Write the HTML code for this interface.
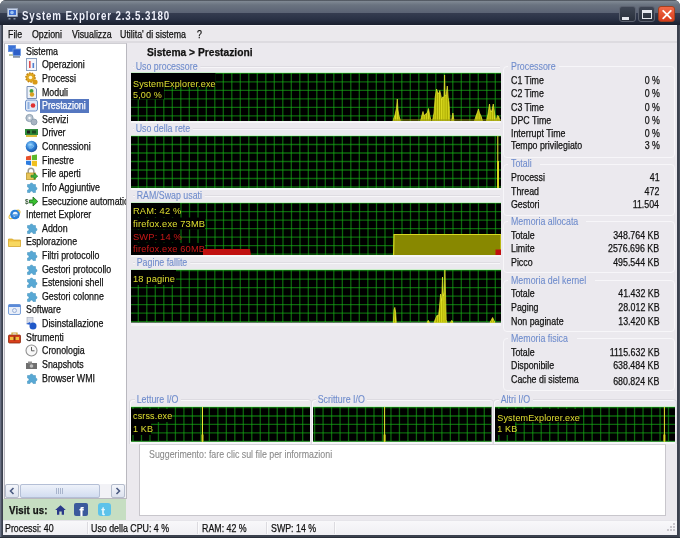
<!DOCTYPE html><html><head><meta charset="utf-8"><style>
html,body{margin:0;padding:0;width:680px;height:538px;overflow:hidden;background:#fff;}
body{position:relative;font-family:"Liberation Sans", sans-serif;}
.t{position:absolute;white-space:nowrap;line-height:1;font-family:"Liberation Sans", sans-serif;-webkit-text-stroke:0.25px currentColor;}
body{will-change:transform;}
.r{position:absolute;box-sizing:border-box;}
</style></head><body>
<div class="r" style="left:0px;top:0px;width:680px;height:538px;background:#3b414e;border-radius:6px 6px 0 0;"></div>
<div class="r" style="left:0px;top:20px;width:1px;height:518px;background:#6a7184;"></div>
<div class="r" style="left:1px;top:20px;width:1px;height:518px;background:#4a5060;"></div>
<div class="r" style="left:679px;top:20px;width:1px;height:518px;background:#4a505c;"></div>
<div class="r" style="left:0px;top:537px;width:680px;height:1px;background:#2a2f3a;"></div>
<div class="r" style="left:0px;top:0px;width:680px;height:25px;border-radius:6px 6px 0 0;background:linear-gradient(#40454e 0px,#7e8792 1.5px,#6a7380 5px,#5a6274 13px,#343b4f 13.5px,#2a3246 19px,#1a1f2e 25px);"></div>
<svg class="r" style="left:7px;top:8px" width="11" height="12" viewBox="0 0 11 12"><rect x="0.5" y="0.5" width="10" height="8" fill="#c8d4ea" stroke="#9aa6bc" stroke-width="0.8"/><rect x="2" y="2" width="7" height="5" fill="#3a6ad0"/><circle cx="5" cy="4.5" r="1.8" fill="#9cc4f4"/><rect x="1.5" y="10" width="2" height="1.5" fill="#8a94a8"/><rect x="6.5" y="10" width="2" height="1.5" fill="#8a94a8"/></svg>
<div class="t" style="left:21.50px;top:9.52px;font-size:12.5px;color:#eef0fa;font-weight:bold;letter-spacing:1.1px;transform-origin:0 0;transform:scaleX(0.78);-webkit-text-stroke:0;">System Explorer 2.3.5.3180</div>
<div class="r" style="left:619px;top:6px;width:17px;height:16px;border-radius:3px;background:linear-gradient(#3f4654,#2a303c);border:1px solid #5c6270;"><div class="r" style="left:2px;top:10px;width:7px;height:2.5px;background:#e6e8ee;"></div></div>
<div class="r" style="left:638px;top:6px;width:17px;height:16px;border-radius:3px;background:linear-gradient(#3f4654,#2a303c);border:1px solid #5c6270;"><div class="r" style="left:3px;top:3px;width:10px;height:9px;border:1.5px solid #e6e8ee;border-top-width:3px;"></div></div>
<div class="r" style="left:658px;top:6px;width:17px;height:16px;border-radius:3px;background:linear-gradient(#f06a48,#d83c1c);border:1px solid #a4401e;"><svg class="r" style="left:2px;top:2px" width="12" height="11" viewBox="0 0 12 11"><path d="M2.2 1.8 L9.8 9.4 M9.8 1.8 L2.2 9.4" stroke="#fff" stroke-width="1.8" stroke-linecap="round"/></svg></div>
<div class="r" style="left:3px;top:25px;width:674px;height:17px;background:#ebe9ed;border-top:1px solid #f6f5f8;"></div>
<div class="t" style="left:8.00px;top:30.00px;font-size:10.4px;color:#111;font-weight:normal;letter-spacing:0px;transform-origin:0 0;transform:scaleX(0.85);">File</div>
<div class="t" style="left:31.70px;top:30.00px;font-size:10.4px;color:#111;font-weight:normal;letter-spacing:0px;transform-origin:0 0;transform:scaleX(0.85);">Opzioni</div>
<div class="t" style="left:71.80px;top:30.00px;font-size:10.4px;color:#111;font-weight:normal;letter-spacing:0px;transform-origin:0 0;transform:scaleX(0.85);">Visualizza</div>
<div class="t" style="left:119.70px;top:30.00px;font-size:10.4px;color:#111;font-weight:normal;letter-spacing:0px;transform-origin:0 0;transform:scaleX(0.85);">Utilita' di sistema</div>
<div class="t" style="left:196.80px;top:30.00px;font-size:10.4px;color:#111;font-weight:normal;letter-spacing:0px;transform-origin:0 0;transform:scaleX(0.85);">?</div>
<div class="r" style="left:3px;top:42px;width:674px;height:478px;background:#ebe9ee;"></div>
<div class="r" style="left:3px;top:41px;width:674px;height:2px;background:#dddbe0;"></div>
<div class="r" style="left:4px;top:43px;width:123px;height:456px;background:#fff;border:1px solid #b9b8bf;border-top-color:#d0cfd4;"></div>
<div class="r" style="left:5px;top:44px;width:121px;height:440px;overflow:hidden;"><div class="r" style="left:-5px;top:-44px;width:680px;height:538px;">
<svg class="r" style="left:8px;top:45px" width="13" height="13" viewBox="0 0 13 13"><rect x="0.5" y="0.5" width="7" height="6" fill="#3a72d8" stroke="#5c88d8" stroke-width="0.8"/><rect x="5" y="4" width="7.5" height="6.5" fill="#2d5fc8" stroke="#6f9be0" stroke-width="0.8"/><rect x="1" y="9" width="4" height="2" fill="#b8c4a8"/><rect x="5" y="11" width="7" height="1.8" fill="#8896a8"/></svg>
<div class="t" style="left:25.90px;top:46.70px;font-size:10.4px;color:#111;font-weight:normal;letter-spacing:0px;transform-origin:0 0;transform:scaleX(0.85);">Sistema</div>
<svg class="r" style="left:24.5px;top:58px" width="13" height="13" viewBox="0 0 13 13"><rect x="1.5" y="0.5" width="10" height="12" fill="#f4f6fb" stroke="#8aa0c0"/><rect x="4" y="3" width="1.6" height="7" fill="#e05050"/><rect x="7.5" y="5" width="1.6" height="5" fill="#5080d0"/></svg>
<div class="t" style="left:41.80px;top:60.32px;font-size:10.4px;color:#111;font-weight:normal;letter-spacing:0px;transform-origin:0 0;transform:scaleX(0.85);">Operazioni</div>
<svg class="r" style="left:24.5px;top:72px" width="13" height="13" viewBox="0 0 13 13"><circle cx="5.5" cy="5.5" r="4.6" fill="#e0a820" stroke="#c08010" stroke-width="1.4" stroke-dasharray="1.6 1.2"/><circle cx="5.5" cy="5.5" r="1.8" fill="#fff6d8"/><circle cx="10" cy="10" r="2.6" fill="#d89a18"/></svg>
<div class="t" style="left:41.80px;top:73.94px;font-size:10.4px;color:#111;font-weight:normal;letter-spacing:0px;transform-origin:0 0;transform:scaleX(0.85);">Processi</div>
<svg class="r" style="left:24.5px;top:86px" width="13" height="13" viewBox="0 0 13 13"><path d="M2 0.5 H9 L11.5 3 V12.5 H2 Z" fill="#eef2f8" stroke="#7890b8"/><circle cx="6.5" cy="5" r="2" fill="#40a040"/><circle cx="7" cy="8.5" r="2.2" fill="#d8a020"/></svg>
<div class="t" style="left:41.80px;top:87.56px;font-size:10.4px;color:#111;font-weight:normal;letter-spacing:0px;transform-origin:0 0;transform:scaleX(0.85);">Moduli</div>
<svg class="r" style="left:24.5px;top:99px" width="13" height="13" viewBox="0 0 13 13"><rect x="0.5" y="1" width="12" height="11" rx="2" fill="#dfe8f6" stroke="#6c90c8"/><rect x="2.5" y="3" width="2" height="7" fill="#90b0e0"/><circle cx="8" cy="6.5" r="2.3" fill="#e03030"/></svg>
<div class="r" style="left:40px;top:99px;width:49px;height:14px;background:#5577c0;"></div>
<div class="t" style="left:41.80px;top:101.18px;font-size:10.4px;color:#fff;font-weight:normal;letter-spacing:0px;transform-origin:0 0;transform:scaleX(0.85);">Prestazioni</div>
<svg class="r" style="left:24.5px;top:113px" width="13" height="13" viewBox="0 0 13 13"><circle cx="4.5" cy="5" r="3.6" fill="#b8c4d0" stroke="#8fa0b0"/><circle cx="9" cy="9" r="3" fill="#a8b4c2" stroke="#8fa0b0"/><circle cx="4.5" cy="5" r="1.2" fill="#fff"/></svg>
<div class="t" style="left:41.80px;top:114.80px;font-size:10.4px;color:#111;font-weight:normal;letter-spacing:0px;transform-origin:0 0;transform:scaleX(0.85);">Servizi</div>
<svg class="r" style="left:24.5px;top:126px" width="13" height="13" viewBox="0 0 13 13"><rect x="0" y="3" width="13" height="6" fill="#2e8a3a"/><rect x="1" y="9" width="11" height="2" fill="#d8c040"/><rect x="2" y="4.5" width="3" height="3" fill="#202020"/><rect x="7" y="4.5" width="4" height="3" fill="#1a4a20"/></svg>
<div class="t" style="left:41.80px;top:128.42px;font-size:10.4px;color:#111;font-weight:normal;letter-spacing:0px;transform-origin:0 0;transform:scaleX(0.85);">Driver</div>
<svg class="r" style="left:24.5px;top:140px" width="13" height="13" viewBox="0 0 13 13"><defs><radialGradient id="gl" cx="0.4" cy="0.35" r="0.7"><stop offset="0" stop-color="#8cd0ff"/><stop offset="0.6" stop-color="#2a7ad0"/><stop offset="1" stop-color="#1a4a98"/></radialGradient></defs><circle cx="6.5" cy="6.5" r="5.8" fill="url(#gl)"/><path d="M3 5 Q6 3 9 6 Q7 9 4 8" stroke="#b8e0ff" stroke-width="0.6" fill="none" opacity="0.7"/></svg>
<div class="t" style="left:41.80px;top:142.04px;font-size:10.4px;color:#111;font-weight:normal;letter-spacing:0px;transform-origin:0 0;transform:scaleX(0.85);">Connessioni</div>
<svg class="r" style="left:24.5px;top:154px" width="13" height="13" viewBox="0 0 13 13"><path d="M1 2.5 L6 1.5 V6 H1 Z" fill="#e8502a"/><path d="M6.8 1.3 L12 0.5 V6 H6.8 Z" fill="#5cb82c"/><path d="M1 6.8 H6 V11.5 L1 10.5 Z" fill="#2c7ce0"/><path d="M6.8 6.8 H12 V12.5 L6.8 11.7 Z" fill="#f0c020"/></svg>
<div class="t" style="left:41.80px;top:155.66px;font-size:10.4px;color:#111;font-weight:normal;letter-spacing:0px;transform-origin:0 0;transform:scaleX(0.85);">Finestre</div>
<svg class="r" style="left:24.5px;top:167px" width="13" height="13" viewBox="0 0 13 13"><path d="M3.2 6 V4 A2.8 2.8 0 0 1 8.8 4 V6" fill="none" stroke="#9a9a98" stroke-width="1.5"/><rect x="1.5" y="6" width="9" height="6.5" fill="#e8c458" stroke="#b89830" stroke-width="0.8"/><path d="M6 8.2 H9 V6 L12.8 9.2 L9 12.4 V10.2 H6 Z" fill="#3cb03c" stroke="#1e7a1e" stroke-width="0.6"/></svg>
<div class="t" style="left:41.80px;top:169.28px;font-size:10.4px;color:#111;font-weight:normal;letter-spacing:0px;transform-origin:0 0;transform:scaleX(0.85);">File aperti</div>
<svg class="r" style="left:24.5px;top:181px" width="13" height="13" viewBox="0 0 13 13"><path d="M2.5 3.5 H5 A1.5 1.5 0 1 1 8 3.5 H10.5 V6 A1.5 1.5 0 1 1 10.5 9 V11.5 H8 A1.5 1.5 0 1 0 5 11.5 H2.5 V9 A1.5 1.5 0 1 0 2.5 6 Z" fill="#58a8d4" stroke="#4090bc" stroke-width="0.5"/></svg>
<div class="t" style="left:41.80px;top:182.90px;font-size:10.4px;color:#111;font-weight:normal;letter-spacing:0px;transform-origin:0 0;transform:scaleX(0.85);">Info Aggiuntive</div>
<svg class="r" style="left:24.5px;top:195px" width="13" height="13" viewBox="0 0 13 13"><text x="0" y="8.5" font-size="6.5" font-family="Liberation Sans" font-weight="bold" fill="#3a5a3a">$</text><path d="M4.5 5 H8 V2 L12.8 6.5 L8 11 V8 H4.5 Z" fill="#38c030" stroke="#1a6a1a" stroke-width="0.8"/></svg>
<div class="t" style="left:41.80px;top:196.52px;font-size:10.4px;color:#111;font-weight:normal;letter-spacing:0px;transform-origin:0 0;transform:scaleX(0.85);">Esecuzione automatica</div>
<svg class="r" style="left:8px;top:208px" width="13" height="13" viewBox="0 0 13 13"><ellipse cx="6.5" cy="6.5" rx="6.3" ry="2.6" transform="rotate(-35 6.5 6.5)" fill="none" stroke="#e8c040" stroke-width="1.1"/><circle cx="7" cy="6.5" r="4.8" fill="#2a80d8"/><circle cx="7.2" cy="6.2" r="2.5" fill="#e8f4ff"/><rect x="4.8" y="6.4" width="5" height="1.3" fill="#2a80d8"/><path d="M7 9 H11" stroke="#2a80d8" stroke-width="1.6"/></svg>
<div class="t" style="left:25.90px;top:210.14px;font-size:10.4px;color:#111;font-weight:normal;letter-spacing:0px;transform-origin:0 0;transform:scaleX(0.85);">Internet Explorer</div>
<svg class="r" style="left:24.5px;top:222px" width="13" height="13" viewBox="0 0 13 13"><path d="M2.5 3.5 H5 A1.5 1.5 0 1 1 8 3.5 H10.5 V6 A1.5 1.5 0 1 1 10.5 9 V11.5 H8 A1.5 1.5 0 1 0 5 11.5 H2.5 V9 A1.5 1.5 0 1 0 2.5 6 Z" fill="#58a8d4" stroke="#4090bc" stroke-width="0.5"/></svg>
<div class="t" style="left:41.80px;top:223.76px;font-size:10.4px;color:#111;font-weight:normal;letter-spacing:0px;transform-origin:0 0;transform:scaleX(0.85);">Addon</div>
<svg class="r" style="left:8px;top:235px" width="13" height="13" viewBox="0 0 13 13"><path d="M0.5 4 H4.5 L5.5 5 H12.5 V11.5 H0.5 Z" fill="#f0c040" stroke="#d0a020" stroke-width="0.7"/><rect x="1" y="6.5" width="11" height="4.5" fill="#f8d860"/></svg>
<div class="t" style="left:25.90px;top:237.38px;font-size:10.4px;color:#111;font-weight:normal;letter-spacing:0px;transform-origin:0 0;transform:scaleX(0.85);">Esplorazione</div>
<svg class="r" style="left:24.5px;top:249px" width="13" height="13" viewBox="0 0 13 13"><path d="M2.5 3.5 H5 A1.5 1.5 0 1 1 8 3.5 H10.5 V6 A1.5 1.5 0 1 1 10.5 9 V11.5 H8 A1.5 1.5 0 1 0 5 11.5 H2.5 V9 A1.5 1.5 0 1 0 2.5 6 Z" fill="#58a8d4" stroke="#4090bc" stroke-width="0.5"/></svg>
<div class="t" style="left:41.80px;top:251.00px;font-size:10.4px;color:#111;font-weight:normal;letter-spacing:0px;transform-origin:0 0;transform:scaleX(0.85);">Filtri protocollo</div>
<svg class="r" style="left:24.5px;top:263px" width="13" height="13" viewBox="0 0 13 13"><path d="M2.5 3.5 H5 A1.5 1.5 0 1 1 8 3.5 H10.5 V6 A1.5 1.5 0 1 1 10.5 9 V11.5 H8 A1.5 1.5 0 1 0 5 11.5 H2.5 V9 A1.5 1.5 0 1 0 2.5 6 Z" fill="#58a8d4" stroke="#4090bc" stroke-width="0.5"/></svg>
<div class="t" style="left:41.80px;top:264.62px;font-size:10.4px;color:#111;font-weight:normal;letter-spacing:0px;transform-origin:0 0;transform:scaleX(0.85);">Gestori protocollo</div>
<svg class="r" style="left:24.5px;top:276px" width="13" height="13" viewBox="0 0 13 13"><path d="M2.5 3.5 H5 A1.5 1.5 0 1 1 8 3.5 H10.5 V6 A1.5 1.5 0 1 1 10.5 9 V11.5 H8 A1.5 1.5 0 1 0 5 11.5 H2.5 V9 A1.5 1.5 0 1 0 2.5 6 Z" fill="#58a8d4" stroke="#4090bc" stroke-width="0.5"/></svg>
<div class="t" style="left:41.80px;top:278.24px;font-size:10.4px;color:#111;font-weight:normal;letter-spacing:0px;transform-origin:0 0;transform:scaleX(0.85);">Estensioni shell</div>
<svg class="r" style="left:24.5px;top:290px" width="13" height="13" viewBox="0 0 13 13"><path d="M2.5 3.5 H5 A1.5 1.5 0 1 1 8 3.5 H10.5 V6 A1.5 1.5 0 1 1 10.5 9 V11.5 H8 A1.5 1.5 0 1 0 5 11.5 H2.5 V9 A1.5 1.5 0 1 0 2.5 6 Z" fill="#58a8d4" stroke="#4090bc" stroke-width="0.5"/></svg>
<div class="t" style="left:41.80px;top:291.86px;font-size:10.4px;color:#111;font-weight:normal;letter-spacing:0px;transform-origin:0 0;transform:scaleX(0.85);">Gestori colonne</div>
<svg class="r" style="left:8px;top:303px" width="13" height="13" viewBox="0 0 13 13"><rect x="0.5" y="1.5" width="12" height="10" rx="1.5" fill="#e8eef8" stroke="#7aa0d8"/><rect x="0.5" y="1.5" width="12" height="2.5" fill="#5a8ad8"/><circle cx="6.5" cy="7.5" r="2" fill="none" stroke="#9ab0d8"/></svg>
<div class="t" style="left:25.90px;top:305.48px;font-size:10.4px;color:#111;font-weight:normal;letter-spacing:0px;transform-origin:0 0;transform:scaleX(0.85);">Software</div>
<svg class="r" style="left:24.5px;top:317px" width="13" height="13" viewBox="0 0 13 13"><rect x="2" y="0.5" width="6" height="6" fill="#d8dce8" stroke="#a0a8b8" stroke-width="0.6"/><circle cx="8" cy="9" r="3.5" fill="#2058c8"/><path d="M1 7 L5 5 L6 8 Z" fill="#2a60d0"/></svg>
<div class="t" style="left:41.80px;top:319.10px;font-size:10.4px;color:#111;font-weight:normal;letter-spacing:0px;transform-origin:0 0;transform:scaleX(0.85);">Disinstallazione</div>
<svg class="r" style="left:8px;top:331px" width="13" height="13" viewBox="0 0 13 13"><rect x="0.5" y="4" width="12" height="8" rx="1" fill="#d8401c" stroke="#8a2a10" stroke-width="0.8"/><path d="M4 4 V2 H9 V4" stroke="#c8a030" stroke-width="1.2" fill="none"/><rect x="2" y="6" width="9" height="3" fill="#f0c040"/><rect x="5.5" y="5.5" width="2" height="4" fill="#8a2a10"/></svg>
<div class="t" style="left:25.90px;top:332.72px;font-size:10.4px;color:#111;font-weight:normal;letter-spacing:0px;transform-origin:0 0;transform:scaleX(0.85);">Strumenti</div>
<svg class="r" style="left:24.5px;top:344px" width="13" height="13" viewBox="0 0 13 13"><circle cx="6.5" cy="6.5" r="5.5" fill="#f8f8f8" stroke="#909090" stroke-width="1.1"/><path d="M6.5 3 V6.8 H9.5" stroke="#606060" stroke-width="1" fill="none"/></svg>
<div class="t" style="left:41.80px;top:346.34px;font-size:10.4px;color:#111;font-weight:normal;letter-spacing:0px;transform-origin:0 0;transform:scaleX(0.85);">Cronologia</div>
<svg class="r" style="left:24.5px;top:358px" width="13" height="13" viewBox="0 0 13 13"><rect x="1" y="5" width="11" height="6" fill="#707070"/><rect x="3" y="3.5" width="4" height="2" fill="#909090"/><circle cx="6.5" cy="8" r="1.8" fill="#c0c0c0"/></svg>
<div class="t" style="left:41.80px;top:359.96px;font-size:10.4px;color:#111;font-weight:normal;letter-spacing:0px;transform-origin:0 0;transform:scaleX(0.85);">Snapshots</div>
<svg class="r" style="left:24.5px;top:372px" width="13" height="13" viewBox="0 0 13 13"><path d="M2.5 3.5 H5 A1.5 1.5 0 1 1 8 3.5 H10.5 V6 A1.5 1.5 0 1 1 10.5 9 V11.5 H8 A1.5 1.5 0 1 0 5 11.5 H2.5 V9 A1.5 1.5 0 1 0 2.5 6 Z" fill="#58a8d4" stroke="#4090bc" stroke-width="0.5"/></svg>
<div class="t" style="left:41.80px;top:373.58px;font-size:10.4px;color:#111;font-weight:normal;letter-spacing:0px;transform-origin:0 0;transform:scaleX(0.85);">Browser WMI</div>
</div></div>
<div class="r" style="left:5px;top:484px;width:121px;height:14px;background:#f2f2f6;"></div>
<div class="r" style="left:5px;top:484px;width:14px;height:14px;background:linear-gradient(#f4f6fb,#dde2ee);border:1px solid #b4bccc;border-radius:2px;"></div>
<svg class="r" style="left:8px;top:487px" width="8" height="8" viewBox="0 0 8 8"><path d="M5.5 1 L2.5 4 L5.5 7" stroke="#4a5a80" stroke-width="1.6" fill="none"/></svg>
<div class="r" style="left:20px;top:484px;width:80px;height:14px;background:linear-gradient(#eef2fa,#d2dcf0);border:1px solid #b4bfd6;border-radius:2px;"></div>
<div class="r" style="left:56px;top:488px;width:7px;height:6px;background:repeating-linear-gradient(90deg,#a8b4cc 0 1px,transparent 1px 2px);"></div>
<div class="r" style="left:111px;top:484px;width:14px;height:14px;background:linear-gradient(#f4f6fb,#dde2ee);border:1px solid #b4bccc;border-radius:2px;"></div>
<svg class="r" style="left:114px;top:487px" width="8" height="8" viewBox="0 0 8 8"><path d="M2.5 1 L5.5 4 L2.5 7" stroke="#4a5a80" stroke-width="1.6" fill="none"/></svg>
<div class="r" style="left:3px;top:499px;width:123px;height:21px;background:#c6dec2;"></div>
<div class="t" style="left:8.60px;top:505.80px;font-size:10.4px;color:#111;font-weight:bold;letter-spacing:0.15px;transform-origin:0 0;transform:scaleX(0.93);">Visit us:</div>
<svg class="r" style="left:55px;top:505px" width="11" height="10" viewBox="0 0 11 10"><path d="M5.5 0.3 L10.8 5 H9 V9.7 H6.7 V6.5 H4.3 V9.7 H2 V5 H0.2 Z" fill="#2a3a8a"/></svg>
<div class="r" style="left:74px;top:503px;width:14px;height:13px;background:#3b5a9c;border-radius:2px;"></div>
<div class="t" style="left:79.50px;top:506.14px;font-size:12px;color:#fff;font-weight:bold;letter-spacing:0px;transform-origin:0 0;">f</div>
<div class="r" style="left:98px;top:503px;width:13px;height:13px;background:#5cc2ea;border-radius:3px;"></div>
<div class="t" style="left:101.50px;top:506.84px;font-size:10px;color:#e8f8ff;font-weight:bold;letter-spacing:0px;transform-origin:0 0;">t</div>
<div class="r" style="left:127px;top:43px;width:4px;height:477px;background:#ebe9ee;"></div>
<div class="t" style="left:146.50px;top:46.99px;font-size:11px;color:#111;font-weight:bold;letter-spacing:0px;transform-origin:0 0;transform:scaleX(0.93);">Sistema &gt; Prestazioni</div>
<div class="r" style="left:133px;top:66px;width:367px;height:1px;background:#dedce2;"></div>
<div class="r" style="left:133px;top:67px;width:367px;height:1px;background:#f7f6f9;"></div>
<div class="t" style="left:134.40px;top:61.60px;font-size:10.4px;color:#6f8ccc;font-weight:normal;letter-spacing:0px;transform-origin:0 0;transform:scaleX(0.85);background:#ebe9ee;padding:0 3px 1px 2px;-webkit-text-stroke:0.1px currentColor;">Uso processore</div>
<div class="r" style="left:131px;top:72px;width:370px;height:1px;background:#c8eec8;"></div>
<div class="r" style="left:131px;top:121px;width:370px;height:2px;background:#f6f6f8;"></div>
<svg class="r" style="left:131px;top:73px" width="370" height="48" viewBox="0 0 370 48"><defs><pattern id="stripes" patternUnits="userSpaceOnUse" width="2.2" height="10"><rect width="2.2" height="10" fill="#a8a800"/><rect width="1.1" height="10" fill="#dede20"/></pattern></defs><rect width="370" height="48" fill="#000"/><g stroke="#16b016" stroke-opacity="0.58" stroke-width="1.3"><line x1="7.30" y1="0" x2="7.30" y2="48"/><line x1="15.80" y1="0" x2="15.80" y2="48"/><line x1="24.30" y1="0" x2="24.30" y2="48"/><line x1="32.80" y1="0" x2="32.80" y2="48"/><line x1="41.30" y1="0" x2="41.30" y2="48"/><line x1="49.80" y1="0" x2="49.80" y2="48"/><line x1="58.30" y1="0" x2="58.30" y2="48"/><line x1="66.80" y1="0" x2="66.80" y2="48"/><line x1="75.30" y1="0" x2="75.30" y2="48"/><line x1="83.80" y1="0" x2="83.80" y2="48"/><line x1="92.30" y1="0" x2="92.30" y2="48"/><line x1="100.80" y1="0" x2="100.80" y2="48"/><line x1="109.30" y1="0" x2="109.30" y2="48"/><line x1="117.80" y1="0" x2="117.80" y2="48"/><line x1="126.30" y1="0" x2="126.30" y2="48"/><line x1="134.80" y1="0" x2="134.80" y2="48"/><line x1="143.30" y1="0" x2="143.30" y2="48"/><line x1="151.80" y1="0" x2="151.80" y2="48"/><line x1="160.30" y1="0" x2="160.30" y2="48"/><line x1="168.80" y1="0" x2="168.80" y2="48"/><line x1="177.30" y1="0" x2="177.30" y2="48"/><line x1="185.80" y1="0" x2="185.80" y2="48"/><line x1="194.30" y1="0" x2="194.30" y2="48"/><line x1="202.80" y1="0" x2="202.80" y2="48"/><line x1="211.30" y1="0" x2="211.30" y2="48"/><line x1="219.80" y1="0" x2="219.80" y2="48"/><line x1="228.30" y1="0" x2="228.30" y2="48"/><line x1="236.80" y1="0" x2="236.80" y2="48"/><line x1="245.30" y1="0" x2="245.30" y2="48"/><line x1="253.80" y1="0" x2="253.80" y2="48"/><line x1="262.30" y1="0" x2="262.30" y2="48"/><line x1="270.80" y1="0" x2="270.80" y2="48"/><line x1="279.30" y1="0" x2="279.30" y2="48"/><line x1="287.80" y1="0" x2="287.80" y2="48"/><line x1="296.30" y1="0" x2="296.30" y2="48"/><line x1="304.80" y1="0" x2="304.80" y2="48"/><line x1="313.30" y1="0" x2="313.30" y2="48"/><line x1="321.80" y1="0" x2="321.80" y2="48"/><line x1="330.30" y1="0" x2="330.30" y2="48"/><line x1="338.80" y1="0" x2="338.80" y2="48"/><line x1="347.30" y1="0" x2="347.30" y2="48"/><line x1="355.80" y1="0" x2="355.80" y2="48"/><line x1="364.30" y1="0" x2="364.30" y2="48"/><line x1="0" y1="0.30" x2="370" y2="0.30"/><line x1="0" y1="8.80" x2="370" y2="8.80"/><line x1="0" y1="17.30" x2="370" y2="17.30"/><line x1="0" y1="25.80" x2="370" y2="25.80"/><line x1="0" y1="34.30" x2="370" y2="34.30"/><line x1="0" y1="42.80" x2="370" y2="42.80"/></g><rect x="0" y="0" width="84.5" height="14" fill="#000"/><rect x="0" y="14" width="33" height="12.4" fill="#000"/><path d="M262.00 47.80 L264.00 42.00 L265.50 35.00 L266.30 26.00 L267.00 37.00 L268.00 43.00 L269.50 47.80 Z" fill="url(#stripes)" stroke="#e8e830" stroke-width="0.7" stroke-linejoin="round"/><path d="M289.50 47.80 L291.00 42.00 L292.00 38.50 L293.00 43.00 L294.50 41.00 L296.20 40.00 L297.50 35.50 L298.50 41.00 L300.00 47.80 Z" fill="url(#stripes)" stroke="#e8e830" stroke-width="0.7" stroke-linejoin="round"/><path d="M301.50 47.80 L303.00 40.00 L304.20 24.00 L305.50 16.00 L306.50 19.00 L307.60 21.00 L308.80 17.50 L310.00 23.00 L310.70 27.00 L311.60 24.00 L313.00 24.00 L313.60 2.00 L314.20 23.00 L315.20 22.00 L316.30 13.00 L317.20 25.00 L318.00 29.00 L319.00 47.80 Z" fill="url(#stripes)" stroke="#e8e830" stroke-width="0.7" stroke-linejoin="round"/><path d="M320.50 47.80 L321.90 40.00 L323.00 47.80 Z" fill="url(#stripes)" stroke="#e8e830" stroke-width="0.7" stroke-linejoin="round"/><path d="M343.50 47.80 L345.00 43.00 L346.50 39.00 L347.50 36.00 L348.50 40.00 L350.00 43.00 L351.50 47.80 Z" fill="url(#stripes)" stroke="#e8e830" stroke-width="0.7" stroke-linejoin="round"/><path d="M355.50 47.80 L357.00 41.00 L358.50 31.00 L359.30 37.00 L360.50 39.00 L362.30 31.00 L363.30 38.00 L364.50 47.80 Z" fill="url(#stripes)" stroke="#e8e830" stroke-width="0.7" stroke-linejoin="round"/><path d="M365.00 47.80 L366.50 42.50 L367.50 43.00 L369.00 47.80 Z" fill="url(#stripes)" stroke="#e8e830" stroke-width="0.7" stroke-linejoin="round"/><path d="M262 47 H370" stroke="#9a9a10" stroke-width="1"/></svg>
<div class="t" style="left:133.00px;top:79.68px;font-size:9.0px;color:#d8d830;font-weight:normal;letter-spacing:0.15px;transform-origin:0 0;-webkit-text-stroke:0.05px currentColor;">SystemExplorer.exe</div>
<div class="t" style="left:133.00px;top:90.88px;font-size:9.0px;color:#d8d830;font-weight:normal;letter-spacing:0.15px;transform-origin:0 0;-webkit-text-stroke:0.05px currentColor;">5,00 %</div>
<div class="r" style="left:133px;top:128px;width:367px;height:1px;background:#dedce2;"></div>
<div class="r" style="left:133px;top:129px;width:367px;height:1px;background:#f7f6f9;"></div>
<div class="t" style="left:134.20px;top:123.80px;font-size:10.4px;color:#6f8ccc;font-weight:normal;letter-spacing:0px;transform-origin:0 0;transform:scaleX(0.85);background:#ebe9ee;padding:0 3px 1px 2px;-webkit-text-stroke:0.1px currentColor;">Uso della rete</div>
<div class="r" style="left:131px;top:134.5px;width:370px;height:1px;background:#c8eec8;"></div>
<div class="r" style="left:131px;top:188px;width:370px;height:2px;background:#f6f6f8;"></div>
<svg class="r" style="left:131px;top:135.5px" width="370" height="52.5" viewBox="0 0 370 52.5"><defs><pattern id="stripes" patternUnits="userSpaceOnUse" width="2.2" height="10"><rect width="2.2" height="10" fill="#a8a800"/><rect width="1.1" height="10" fill="#dede20"/></pattern></defs><rect width="370" height="52.5" fill="#000"/><g stroke="#16b016" stroke-opacity="0.58" stroke-width="1.3"><line x1="7.30" y1="0" x2="7.30" y2="52.5"/><line x1="15.80" y1="0" x2="15.80" y2="52.5"/><line x1="24.30" y1="0" x2="24.30" y2="52.5"/><line x1="32.80" y1="0" x2="32.80" y2="52.5"/><line x1="41.30" y1="0" x2="41.30" y2="52.5"/><line x1="49.80" y1="0" x2="49.80" y2="52.5"/><line x1="58.30" y1="0" x2="58.30" y2="52.5"/><line x1="66.80" y1="0" x2="66.80" y2="52.5"/><line x1="75.30" y1="0" x2="75.30" y2="52.5"/><line x1="83.80" y1="0" x2="83.80" y2="52.5"/><line x1="92.30" y1="0" x2="92.30" y2="52.5"/><line x1="100.80" y1="0" x2="100.80" y2="52.5"/><line x1="109.30" y1="0" x2="109.30" y2="52.5"/><line x1="117.80" y1="0" x2="117.80" y2="52.5"/><line x1="126.30" y1="0" x2="126.30" y2="52.5"/><line x1="134.80" y1="0" x2="134.80" y2="52.5"/><line x1="143.30" y1="0" x2="143.30" y2="52.5"/><line x1="151.80" y1="0" x2="151.80" y2="52.5"/><line x1="160.30" y1="0" x2="160.30" y2="52.5"/><line x1="168.80" y1="0" x2="168.80" y2="52.5"/><line x1="177.30" y1="0" x2="177.30" y2="52.5"/><line x1="185.80" y1="0" x2="185.80" y2="52.5"/><line x1="194.30" y1="0" x2="194.30" y2="52.5"/><line x1="202.80" y1="0" x2="202.80" y2="52.5"/><line x1="211.30" y1="0" x2="211.30" y2="52.5"/><line x1="219.80" y1="0" x2="219.80" y2="52.5"/><line x1="228.30" y1="0" x2="228.30" y2="52.5"/><line x1="236.80" y1="0" x2="236.80" y2="52.5"/><line x1="245.30" y1="0" x2="245.30" y2="52.5"/><line x1="253.80" y1="0" x2="253.80" y2="52.5"/><line x1="262.30" y1="0" x2="262.30" y2="52.5"/><line x1="270.80" y1="0" x2="270.80" y2="52.5"/><line x1="279.30" y1="0" x2="279.30" y2="52.5"/><line x1="287.80" y1="0" x2="287.80" y2="52.5"/><line x1="296.30" y1="0" x2="296.30" y2="52.5"/><line x1="304.80" y1="0" x2="304.80" y2="52.5"/><line x1="313.30" y1="0" x2="313.30" y2="52.5"/><line x1="321.80" y1="0" x2="321.80" y2="52.5"/><line x1="330.30" y1="0" x2="330.30" y2="52.5"/><line x1="338.80" y1="0" x2="338.80" y2="52.5"/><line x1="347.30" y1="0" x2="347.30" y2="52.5"/><line x1="355.80" y1="0" x2="355.80" y2="52.5"/><line x1="364.30" y1="0" x2="364.30" y2="52.5"/><line x1="0" y1="0.00" x2="370" y2="0.00"/><line x1="0" y1="8.50" x2="370" y2="8.50"/><line x1="0" y1="17.00" x2="370" y2="17.00"/><line x1="0" y1="25.50" x2="370" y2="25.50"/><line x1="0" y1="34.00" x2="370" y2="34.00"/><line x1="0" y1="42.50" x2="370" y2="42.50"/><line x1="0" y1="51.00" x2="370" y2="51.00"/></g><path d="M366.8 0 V52.5" stroke="#e8e830" stroke-width="1"/><rect x="366" y="25" width="2" height="28" fill="#d8d820"/></svg>
<div class="r" style="left:133px;top:195px;width:367px;height:1px;background:#dedce2;"></div>
<div class="r" style="left:133px;top:196px;width:367px;height:1px;background:#f7f6f9;"></div>
<div class="t" style="left:134.90px;top:190.80px;font-size:10.4px;color:#6f8ccc;font-weight:normal;letter-spacing:0px;transform-origin:0 0;transform:scaleX(0.85);background:#ebe9ee;padding:0 3px 1px 2px;-webkit-text-stroke:0.1px currentColor;">RAM/Swap usati</div>
<div class="r" style="left:131px;top:201.5px;width:370px;height:1px;background:#c8eec8;"></div>
<div class="r" style="left:131px;top:255px;width:370px;height:2px;background:#f6f6f8;"></div>
<svg class="r" style="left:131px;top:202.5px" width="370" height="52.5" viewBox="0 0 370 52.5"><defs><pattern id="stripes" patternUnits="userSpaceOnUse" width="2.2" height="10"><rect width="2.2" height="10" fill="#a8a800"/><rect width="1.1" height="10" fill="#dede20"/></pattern></defs><rect width="370" height="52.5" fill="#000"/><g stroke="#16b016" stroke-opacity="0.58" stroke-width="1.3"><line x1="7.50" y1="0" x2="7.50" y2="52.5"/><line x1="16.00" y1="0" x2="16.00" y2="52.5"/><line x1="24.50" y1="0" x2="24.50" y2="52.5"/><line x1="33.00" y1="0" x2="33.00" y2="52.5"/><line x1="41.50" y1="0" x2="41.50" y2="52.5"/><line x1="50.00" y1="0" x2="50.00" y2="52.5"/><line x1="58.50" y1="0" x2="58.50" y2="52.5"/><line x1="67.00" y1="0" x2="67.00" y2="52.5"/><line x1="75.50" y1="0" x2="75.50" y2="52.5"/><line x1="84.00" y1="0" x2="84.00" y2="52.5"/><line x1="92.50" y1="0" x2="92.50" y2="52.5"/><line x1="101.00" y1="0" x2="101.00" y2="52.5"/><line x1="109.50" y1="0" x2="109.50" y2="52.5"/><line x1="118.00" y1="0" x2="118.00" y2="52.5"/><line x1="126.50" y1="0" x2="126.50" y2="52.5"/><line x1="135.00" y1="0" x2="135.00" y2="52.5"/><line x1="143.50" y1="0" x2="143.50" y2="52.5"/><line x1="152.00" y1="0" x2="152.00" y2="52.5"/><line x1="160.50" y1="0" x2="160.50" y2="52.5"/><line x1="169.00" y1="0" x2="169.00" y2="52.5"/><line x1="177.50" y1="0" x2="177.50" y2="52.5"/><line x1="186.00" y1="0" x2="186.00" y2="52.5"/><line x1="194.50" y1="0" x2="194.50" y2="52.5"/><line x1="203.00" y1="0" x2="203.00" y2="52.5"/><line x1="211.50" y1="0" x2="211.50" y2="52.5"/><line x1="220.00" y1="0" x2="220.00" y2="52.5"/><line x1="228.50" y1="0" x2="228.50" y2="52.5"/><line x1="237.00" y1="0" x2="237.00" y2="52.5"/><line x1="245.50" y1="0" x2="245.50" y2="52.5"/><line x1="254.00" y1="0" x2="254.00" y2="52.5"/><line x1="262.50" y1="0" x2="262.50" y2="52.5"/><line x1="271.00" y1="0" x2="271.00" y2="52.5"/><line x1="279.50" y1="0" x2="279.50" y2="52.5"/><line x1="288.00" y1="0" x2="288.00" y2="52.5"/><line x1="296.50" y1="0" x2="296.50" y2="52.5"/><line x1="305.00" y1="0" x2="305.00" y2="52.5"/><line x1="313.50" y1="0" x2="313.50" y2="52.5"/><line x1="322.00" y1="0" x2="322.00" y2="52.5"/><line x1="330.50" y1="0" x2="330.50" y2="52.5"/><line x1="339.00" y1="0" x2="339.00" y2="52.5"/><line x1="347.50" y1="0" x2="347.50" y2="52.5"/><line x1="356.00" y1="0" x2="356.00" y2="52.5"/><line x1="364.50" y1="0" x2="364.50" y2="52.5"/><line x1="0" y1="0.10" x2="370" y2="0.10"/><line x1="0" y1="8.60" x2="370" y2="8.60"/><line x1="0" y1="17.10" x2="370" y2="17.10"/><line x1="0" y1="25.60" x2="370" y2="25.60"/><line x1="0" y1="34.10" x2="370" y2="34.10"/><line x1="0" y1="42.60" x2="370" y2="42.60"/><line x1="0" y1="51.10" x2="370" y2="51.10"/></g><rect x="0" y="0" width="49" height="14" fill="#000"/><rect x="0" y="14.5" width="74" height="12" fill="#000"/><rect x="0" y="27" width="49" height="12.5" fill="#000"/><rect x="0" y="40" width="74" height="12.5" fill="#000"/><path d="M262.6 52.5 L263 31.5 H370 V52.5 Z" fill="#888800" stroke="#d8d820" stroke-width="1.2"/><rect x="364.5" y="46.5" width="6" height="6" fill="#c01010"/><path d="M72 46 H119 L120 52 H72 Z" fill="#c01010"/></svg>
<div class="t" style="left:133.00px;top:207.43px;font-size:9.3px;color:#d8d830;font-weight:normal;letter-spacing:0.15px;transform-origin:0 0;-webkit-text-stroke:0.05px currentColor;">RAM: 42 %</div>
<div class="t" style="left:133.00px;top:220.23px;font-size:9.3px;color:#d8d830;font-weight:normal;letter-spacing:0.15px;transform-origin:0 0;-webkit-text-stroke:0.05px currentColor;">firefox.exe 73MB</div>
<div class="t" style="left:133.00px;top:232.93px;font-size:9.3px;color:#c41818;font-weight:normal;letter-spacing:0.15px;transform-origin:0 0;-webkit-text-stroke:0.05px currentColor;">SWP: 14 %</div>
<div class="t" style="left:133.00px;top:244.63px;font-size:9.3px;color:#c41818;font-weight:normal;letter-spacing:0.15px;transform-origin:0 0;-webkit-text-stroke:0.05px currentColor;">firefox.exe 60MB</div>
<div class="r" style="left:133px;top:262px;width:367px;height:1px;background:#dedce2;"></div>
<div class="r" style="left:133px;top:263px;width:367px;height:1px;background:#f7f6f9;"></div>
<div class="t" style="left:134.90px;top:257.50px;font-size:10.4px;color:#6f8ccc;font-weight:normal;letter-spacing:0px;transform-origin:0 0;transform:scaleX(0.85);background:#ebe9ee;padding:0 3px 1px 2px;-webkit-text-stroke:0.1px currentColor;">Pagine fallite</div>
<div class="r" style="left:131px;top:269px;width:370px;height:1px;background:#c8eec8;"></div>
<div class="r" style="left:131px;top:322.5px;width:370px;height:2px;background:#f6f6f8;"></div>
<svg class="r" style="left:131px;top:270px" width="370" height="52.5" viewBox="0 0 370 52.5"><defs><pattern id="stripes" patternUnits="userSpaceOnUse" width="2.2" height="10"><rect width="2.2" height="10" fill="#a8a800"/><rect width="1.1" height="10" fill="#dede20"/></pattern></defs><rect width="370" height="52.5" fill="#000"/><g stroke="#16b016" stroke-opacity="0.58" stroke-width="1.3"><line x1="7.30" y1="0" x2="7.30" y2="52.5"/><line x1="15.80" y1="0" x2="15.80" y2="52.5"/><line x1="24.30" y1="0" x2="24.30" y2="52.5"/><line x1="32.80" y1="0" x2="32.80" y2="52.5"/><line x1="41.30" y1="0" x2="41.30" y2="52.5"/><line x1="49.80" y1="0" x2="49.80" y2="52.5"/><line x1="58.30" y1="0" x2="58.30" y2="52.5"/><line x1="66.80" y1="0" x2="66.80" y2="52.5"/><line x1="75.30" y1="0" x2="75.30" y2="52.5"/><line x1="83.80" y1="0" x2="83.80" y2="52.5"/><line x1="92.30" y1="0" x2="92.30" y2="52.5"/><line x1="100.80" y1="0" x2="100.80" y2="52.5"/><line x1="109.30" y1="0" x2="109.30" y2="52.5"/><line x1="117.80" y1="0" x2="117.80" y2="52.5"/><line x1="126.30" y1="0" x2="126.30" y2="52.5"/><line x1="134.80" y1="0" x2="134.80" y2="52.5"/><line x1="143.30" y1="0" x2="143.30" y2="52.5"/><line x1="151.80" y1="0" x2="151.80" y2="52.5"/><line x1="160.30" y1="0" x2="160.30" y2="52.5"/><line x1="168.80" y1="0" x2="168.80" y2="52.5"/><line x1="177.30" y1="0" x2="177.30" y2="52.5"/><line x1="185.80" y1="0" x2="185.80" y2="52.5"/><line x1="194.30" y1="0" x2="194.30" y2="52.5"/><line x1="202.80" y1="0" x2="202.80" y2="52.5"/><line x1="211.30" y1="0" x2="211.30" y2="52.5"/><line x1="219.80" y1="0" x2="219.80" y2="52.5"/><line x1="228.30" y1="0" x2="228.30" y2="52.5"/><line x1="236.80" y1="0" x2="236.80" y2="52.5"/><line x1="245.30" y1="0" x2="245.30" y2="52.5"/><line x1="253.80" y1="0" x2="253.80" y2="52.5"/><line x1="262.30" y1="0" x2="262.30" y2="52.5"/><line x1="270.80" y1="0" x2="270.80" y2="52.5"/><line x1="279.30" y1="0" x2="279.30" y2="52.5"/><line x1="287.80" y1="0" x2="287.80" y2="52.5"/><line x1="296.30" y1="0" x2="296.30" y2="52.5"/><line x1="304.80" y1="0" x2="304.80" y2="52.5"/><line x1="313.30" y1="0" x2="313.30" y2="52.5"/><line x1="321.80" y1="0" x2="321.80" y2="52.5"/><line x1="330.30" y1="0" x2="330.30" y2="52.5"/><line x1="338.80" y1="0" x2="338.80" y2="52.5"/><line x1="347.30" y1="0" x2="347.30" y2="52.5"/><line x1="355.80" y1="0" x2="355.80" y2="52.5"/><line x1="364.30" y1="0" x2="364.30" y2="52.5"/><line x1="0" y1="0.70" x2="370" y2="0.70"/><line x1="0" y1="9.20" x2="370" y2="9.20"/><line x1="0" y1="17.70" x2="370" y2="17.70"/><line x1="0" y1="26.20" x2="370" y2="26.20"/><line x1="0" y1="34.70" x2="370" y2="34.70"/><line x1="0" y1="43.20" x2="370" y2="43.20"/><line x1="0" y1="51.70" x2="370" y2="51.70"/></g><rect x="0" y="0" width="45" height="15" fill="#000"/><path d="M262.30 52.60 L263.00 40.00 L263.80 37.40 L264.60 42.00 L265.30 52.60 Z" fill="url(#stripes)" stroke="#e8e830" stroke-width="0.7" stroke-linejoin="round"/><path d="M296.00 52.60 L297.30 50.30 L298.50 52.60 Z" fill="url(#stripes)" stroke="#e8e830" stroke-width="0.7" stroke-linejoin="round"/><path d="M303.00 52.60 L304.60 48.40 L306.30 45.00 L307.50 46.00 L308.50 37.20 L309.60 24.00 L310.70 30.60 L311.50 7.00 L312.40 26.00 L313.40 22.00 L313.90 -0.50 L314.60 26.00 L315.20 49.50 L316.00 52.60 Z" fill="url(#stripes)" stroke="#e8e830" stroke-width="0.7" stroke-linejoin="round"/><path d="M319.50 52.60 L320.80 50.30 L322.00 52.60 Z" fill="url(#stripes)" stroke="#e8e830" stroke-width="0.7" stroke-linejoin="round"/><path d="M359.00 52.60 L361.60 47.50 L364.00 52.60 Z" fill="url(#stripes)" stroke="#e8e830" stroke-width="0.7" stroke-linejoin="round"/></svg>
<div class="t" style="left:133.00px;top:274.73px;font-size:9.3px;color:#d8d830;font-weight:normal;letter-spacing:0.15px;transform-origin:0 0;-webkit-text-stroke:0.05px currentColor;">18 pagine</div>
<div class="r" style="left:131px;top:323px;width:370px;height:3px;background:#f3f2f5;"></div>
<div class="r" style="left:503px;top:66px;width:172px;height:92px;border:1px solid #f7f6f9;border-radius:4px;background:#ebe9ee;"></div>
<div class="r" style="left:508px;top:63px;width:51px;height:6px;background:#ebe9ee;"></div>
<div class="t" style="left:510.90px;top:62.20px;font-size:10.4px;color:#6f8ccc;font-weight:normal;letter-spacing:0px;transform-origin:0 0;transform:scaleX(0.85);-webkit-text-stroke:0.1px currentColor;">Processore</div>
<div class="t" style="left:510.90px;top:75.60px;font-size:10.4px;color:#111;font-weight:normal;letter-spacing:0px;transform-origin:0 0;transform:scaleX(0.85);">C1 Time</div>
<div class="t" style="right:20.50px;top:75.60px;font-size:10.4px;color:#111;font-weight:normal;letter-spacing:0px;text-align:right;transform-origin:100% 0;transform:scaleX(0.85);">0 %</div>
<div class="t" style="left:510.90px;top:89.30px;font-size:10.4px;color:#111;font-weight:normal;letter-spacing:0px;transform-origin:0 0;transform:scaleX(0.85);">C2 Time</div>
<div class="t" style="right:20.50px;top:89.30px;font-size:10.4px;color:#111;font-weight:normal;letter-spacing:0px;text-align:right;transform-origin:100% 0;transform:scaleX(0.85);">0 %</div>
<div class="t" style="left:510.90px;top:102.70px;font-size:10.4px;color:#111;font-weight:normal;letter-spacing:0px;transform-origin:0 0;transform:scaleX(0.85);">C3 Time</div>
<div class="t" style="right:20.50px;top:102.70px;font-size:10.4px;color:#111;font-weight:normal;letter-spacing:0px;text-align:right;transform-origin:100% 0;transform:scaleX(0.85);">0 %</div>
<div class="t" style="left:510.90px;top:116.10px;font-size:10.4px;color:#111;font-weight:normal;letter-spacing:0px;transform-origin:0 0;transform:scaleX(0.85);">DPC Time</div>
<div class="t" style="right:20.50px;top:116.10px;font-size:10.4px;color:#111;font-weight:normal;letter-spacing:0px;text-align:right;transform-origin:100% 0;transform:scaleX(0.85);">0 %</div>
<div class="t" style="left:510.90px;top:129.10px;font-size:10.4px;color:#111;font-weight:normal;letter-spacing:0px;transform-origin:0 0;transform:scaleX(0.85);">Interrupt Time</div>
<div class="t" style="right:20.50px;top:129.10px;font-size:10.4px;color:#111;font-weight:normal;letter-spacing:0px;text-align:right;transform-origin:100% 0;transform:scaleX(0.85);">0 %</div>
<div class="t" style="left:510.90px;top:141.20px;font-size:10.4px;color:#111;font-weight:normal;letter-spacing:0px;transform-origin:0 0;transform:scaleX(0.85);">Tempo privilegiato</div>
<div class="t" style="right:20.50px;top:141.20px;font-size:10.4px;color:#111;font-weight:normal;letter-spacing:0px;text-align:right;transform-origin:100% 0;transform:scaleX(0.85);">3 %</div>
<div class="r" style="left:503px;top:164px;width:172px;height:52px;border:1px solid #f7f6f9;border-radius:4px;background:#ebe9ee;"></div>
<div class="r" style="left:508px;top:161px;width:32px;height:6px;background:#ebe9ee;"></div>
<div class="t" style="left:510.90px;top:159.30px;font-size:10.4px;color:#6f8ccc;font-weight:normal;letter-spacing:0px;transform-origin:0 0;transform:scaleX(0.85);-webkit-text-stroke:0.1px currentColor;">Totali</div>
<div class="t" style="left:510.90px;top:173.00px;font-size:10.4px;color:#111;font-weight:normal;letter-spacing:0px;transform-origin:0 0;transform:scaleX(0.85);">Processi</div>
<div class="t" style="right:20.50px;top:173.00px;font-size:10.4px;color:#111;font-weight:normal;letter-spacing:0px;text-align:right;transform-origin:100% 0;transform:scaleX(0.85);">41</div>
<div class="t" style="left:510.90px;top:186.90px;font-size:10.4px;color:#111;font-weight:normal;letter-spacing:0px;transform-origin:0 0;transform:scaleX(0.85);">Thread</div>
<div class="t" style="right:20.50px;top:186.90px;font-size:10.4px;color:#111;font-weight:normal;letter-spacing:0px;text-align:right;transform-origin:100% 0;transform:scaleX(0.85);">472</div>
<div class="t" style="left:510.90px;top:200.20px;font-size:10.4px;color:#111;font-weight:normal;letter-spacing:0px;transform-origin:0 0;transform:scaleX(0.85);">Gestori</div>
<div class="t" style="right:20.50px;top:200.20px;font-size:10.4px;color:#111;font-weight:normal;letter-spacing:0px;text-align:right;transform-origin:100% 0;transform:scaleX(0.85);">11.504</div>
<div class="r" style="left:503px;top:221px;width:172px;height:52px;border:1px solid #f7f6f9;border-radius:4px;background:#ebe9ee;"></div>
<div class="r" style="left:508px;top:218px;width:78px;height:6px;background:#ebe9ee;"></div>
<div class="t" style="left:510.90px;top:216.70px;font-size:10.4px;color:#6f8ccc;font-weight:normal;letter-spacing:0px;transform-origin:0 0;transform:scaleX(0.85);-webkit-text-stroke:0.1px currentColor;">Memoria allocata</div>
<div class="t" style="left:510.90px;top:230.60px;font-size:10.4px;color:#111;font-weight:normal;letter-spacing:0px;transform-origin:0 0;transform:scaleX(0.85);">Totale</div>
<div class="t" style="right:20.50px;top:230.60px;font-size:10.4px;color:#111;font-weight:normal;letter-spacing:0px;text-align:right;transform-origin:100% 0;transform:scaleX(0.85);">348.764 KB</div>
<div class="t" style="left:510.90px;top:244.00px;font-size:10.4px;color:#111;font-weight:normal;letter-spacing:0px;transform-origin:0 0;transform:scaleX(0.85);">Limite</div>
<div class="t" style="right:20.50px;top:244.00px;font-size:10.4px;color:#111;font-weight:normal;letter-spacing:0px;text-align:right;transform-origin:100% 0;transform:scaleX(0.85);">2576.696 KB</div>
<div class="t" style="left:510.90px;top:257.70px;font-size:10.4px;color:#111;font-weight:normal;letter-spacing:0px;transform-origin:0 0;transform:scaleX(0.85);">Picco</div>
<div class="t" style="right:20.50px;top:257.70px;font-size:10.4px;color:#111;font-weight:normal;letter-spacing:0px;text-align:right;transform-origin:100% 0;transform:scaleX(0.85);">495.544 KB</div>
<div class="r" style="left:503px;top:280px;width:172px;height:52px;border:1px solid #f7f6f9;border-radius:4px;background:#ebe9ee;"></div>
<div class="r" style="left:508px;top:277px;width:87px;height:6px;background:#ebe9ee;"></div>
<div class="t" style="left:510.90px;top:275.70px;font-size:10.4px;color:#6f8ccc;font-weight:normal;letter-spacing:0px;transform-origin:0 0;transform:scaleX(0.85);-webkit-text-stroke:0.1px currentColor;">Memoria del kernel</div>
<div class="t" style="left:510.90px;top:289.20px;font-size:10.4px;color:#111;font-weight:normal;letter-spacing:0px;transform-origin:0 0;transform:scaleX(0.85);">Totale</div>
<div class="t" style="right:20.50px;top:289.20px;font-size:10.4px;color:#111;font-weight:normal;letter-spacing:0px;text-align:right;transform-origin:100% 0;transform:scaleX(0.85);">41.432 KB</div>
<div class="t" style="left:510.90px;top:302.90px;font-size:10.4px;color:#111;font-weight:normal;letter-spacing:0px;transform-origin:0 0;transform:scaleX(0.85);">Paging</div>
<div class="t" style="right:20.50px;top:302.90px;font-size:10.4px;color:#111;font-weight:normal;letter-spacing:0px;text-align:right;transform-origin:100% 0;transform:scaleX(0.85);">28.012 KB</div>
<div class="t" style="left:510.90px;top:316.80px;font-size:10.4px;color:#111;font-weight:normal;letter-spacing:0px;transform-origin:0 0;transform:scaleX(0.85);">Non paginate</div>
<div class="t" style="right:20.50px;top:316.80px;font-size:10.4px;color:#111;font-weight:normal;letter-spacing:0px;text-align:right;transform-origin:100% 0;transform:scaleX(0.85);">13.420 KB</div>
<div class="r" style="left:503px;top:338px;width:172px;height:53px;border:1px solid #f7f6f9;border-radius:4px;background:#ebe9ee;"></div>
<div class="r" style="left:508px;top:335px;width:69px;height:6px;background:#ebe9ee;"></div>
<div class="t" style="left:510.90px;top:334.30px;font-size:10.4px;color:#6f8ccc;font-weight:normal;letter-spacing:0px;transform-origin:0 0;transform:scaleX(0.85);-webkit-text-stroke:0.1px currentColor;">Memoria fisica</div>
<div class="t" style="left:510.90px;top:347.80px;font-size:10.4px;color:#111;font-weight:normal;letter-spacing:0px;transform-origin:0 0;transform:scaleX(0.85);">Totale</div>
<div class="t" style="right:20.50px;top:347.80px;font-size:10.4px;color:#111;font-weight:normal;letter-spacing:0px;text-align:right;transform-origin:100% 0;transform:scaleX(0.85);">1115.632 KB</div>
<div class="t" style="left:510.90px;top:361.20px;font-size:10.4px;color:#111;font-weight:normal;letter-spacing:0px;transform-origin:0 0;transform:scaleX(0.85);">Disponibile</div>
<div class="t" style="right:20.50px;top:361.20px;font-size:10.4px;color:#111;font-weight:normal;letter-spacing:0px;text-align:right;transform-origin:100% 0;transform:scaleX(0.85);">638.484 KB</div>
<div class="t" style="left:510.90px;top:375.00px;font-size:10.4px;color:#111;font-weight:normal;letter-spacing:0px;transform-origin:0 0;transform:scaleX(0.85);">Cache di sistema</div>
<div class="t" style="right:20.50px;top:377.00px;font-size:10.4px;color:#111;font-weight:normal;letter-spacing:0px;text-align:right;transform-origin:100% 0;transform:scaleX(0.85);">680.824 KB</div>
<div class="r" style="left:129px;top:399px;width:183px;height:45px;border:1px solid #dddbe1;border-bottom:none;border-radius:4px 4px 0 0;box-shadow:inset 1px 1px 0 #f8f8fa;"></div>
<div class="r" style="left:311px;top:399px;width:183px;height:45px;border:1px solid #dddbe1;border-bottom:none;border-radius:4px 4px 0 0;box-shadow:inset 1px 1px 0 #f8f8fa;"></div>
<div class="r" style="left:493px;top:399px;width:184px;height:45px;border:1px solid #dddbe1;border-bottom:none;border-radius:4px 4px 0 0;box-shadow:inset 1px 1px 0 #f8f8fa;"></div>
<div class="t" style="left:134.50px;top:395.20px;font-size:10.4px;color:#6f8ccc;font-weight:normal;letter-spacing:0px;transform-origin:0 0;transform:scaleX(0.85);background:#ebe9ee;padding:0 3px 1px 2px;-webkit-text-stroke:0.1px currentColor;">Letture I/O</div>
<div class="t" style="left:316.40px;top:395.20px;font-size:10.4px;color:#6f8ccc;font-weight:normal;letter-spacing:0px;transform-origin:0 0;transform:scaleX(0.85);background:#ebe9ee;padding:0 3px 1px 2px;-webkit-text-stroke:0.1px currentColor;">Scritture I/O</div>
<div class="t" style="left:498.70px;top:395.20px;font-size:10.4px;color:#6f8ccc;font-weight:normal;letter-spacing:0px;transform-origin:0 0;transform:scaleX(0.85);background:#ebe9ee;padding:0 3px 1px 2px;-webkit-text-stroke:0.1px currentColor;">Altri I/O</div>
<div class="r" style="left:131px;top:406px;width:179px;height:1px;background:#c8eec8;"></div>
<div class="r" style="left:131px;top:441.5px;width:179px;height:2px;background:#f6f6f8;"></div>
<svg class="r" style="left:131px;top:407px" width="179" height="34.5" viewBox="0 0 179 34.5"><defs><pattern id="stripes" patternUnits="userSpaceOnUse" width="2.2" height="10"><rect width="2.2" height="10" fill="#a8a800"/><rect width="1.1" height="10" fill="#dede20"/></pattern></defs><rect width="179" height="34.5" fill="#000"/><g stroke="#16b016" stroke-opacity="0.58" stroke-width="1.3"><line x1="2.00" y1="0" x2="2.00" y2="34.5"/><line x1="10.48" y1="0" x2="10.48" y2="34.5"/><line x1="18.97" y1="0" x2="18.97" y2="34.5"/><line x1="27.45" y1="0" x2="27.45" y2="34.5"/><line x1="35.94" y1="0" x2="35.94" y2="34.5"/><line x1="44.42" y1="0" x2="44.42" y2="34.5"/><line x1="52.91" y1="0" x2="52.91" y2="34.5"/><line x1="61.39" y1="0" x2="61.39" y2="34.5"/><line x1="69.88" y1="0" x2="69.88" y2="34.5"/><line x1="78.36" y1="0" x2="78.36" y2="34.5"/><line x1="86.85" y1="0" x2="86.85" y2="34.5"/><line x1="95.33" y1="0" x2="95.33" y2="34.5"/><line x1="103.82" y1="0" x2="103.82" y2="34.5"/><line x1="112.30" y1="0" x2="112.30" y2="34.5"/><line x1="120.79" y1="0" x2="120.79" y2="34.5"/><line x1="129.27" y1="0" x2="129.27" y2="34.5"/><line x1="137.76" y1="0" x2="137.76" y2="34.5"/><line x1="146.25" y1="0" x2="146.25" y2="34.5"/><line x1="154.73" y1="0" x2="154.73" y2="34.5"/><line x1="163.22" y1="0" x2="163.22" y2="34.5"/><line x1="171.70" y1="0" x2="171.70" y2="34.5"/><line x1="0" y1="0.50" x2="179" y2="0.50"/><line x1="0" y1="8.98" x2="179" y2="8.98"/><line x1="0" y1="17.47" x2="179" y2="17.47"/><line x1="0" y1="25.95" x2="179" y2="25.95"/><line x1="0" y1="34.44" x2="179" y2="34.44"/></g><rect x="0" y="2" width="41" height="13" fill="#000"/><rect x="0" y="15" width="20" height="13" fill="#000"/><path d="M71.5 0 V35" stroke="#e8e830" stroke-width="1"/><rect x="70.5" y="27.5" width="2" height="7" fill="#d8d820"/></svg>
<div class="t" style="left:133.00px;top:412.48px;font-size:9.0px;color:#d8d830;font-weight:normal;letter-spacing:0.15px;transform-origin:0 0;-webkit-text-stroke:0.05px currentColor;">csrss.exe</div>
<div class="t" style="left:133.00px;top:425.18px;font-size:9px;color:#d8d830;font-weight:normal;letter-spacing:0.15px;transform-origin:0 0;-webkit-text-stroke:0.05px currentColor;">1 KB</div>
<div class="r" style="left:313px;top:406px;width:178.5px;height:1px;background:#c8eec8;"></div>
<div class="r" style="left:313px;top:441.5px;width:178.5px;height:2px;background:#f6f6f8;"></div>
<svg class="r" style="left:313px;top:407px" width="178.5" height="34.5" viewBox="0 0 178.5 34.5"><defs><pattern id="stripes" patternUnits="userSpaceOnUse" width="2.2" height="10"><rect width="2.2" height="10" fill="#a8a800"/><rect width="1.1" height="10" fill="#dede20"/></pattern></defs><rect width="178.5" height="34.5" fill="#000"/><g stroke="#16b016" stroke-opacity="0.58" stroke-width="1.3"><line x1="1.60" y1="0" x2="1.60" y2="34.5"/><line x1="10.08" y1="0" x2="10.08" y2="34.5"/><line x1="18.57" y1="0" x2="18.57" y2="34.5"/><line x1="27.05" y1="0" x2="27.05" y2="34.5"/><line x1="35.54" y1="0" x2="35.54" y2="34.5"/><line x1="44.02" y1="0" x2="44.02" y2="34.5"/><line x1="52.51" y1="0" x2="52.51" y2="34.5"/><line x1="60.99" y1="0" x2="60.99" y2="34.5"/><line x1="69.48" y1="0" x2="69.48" y2="34.5"/><line x1="77.96" y1="0" x2="77.96" y2="34.5"/><line x1="86.45" y1="0" x2="86.45" y2="34.5"/><line x1="94.93" y1="0" x2="94.93" y2="34.5"/><line x1="103.42" y1="0" x2="103.42" y2="34.5"/><line x1="111.90" y1="0" x2="111.90" y2="34.5"/><line x1="120.39" y1="0" x2="120.39" y2="34.5"/><line x1="128.88" y1="0" x2="128.88" y2="34.5"/><line x1="137.36" y1="0" x2="137.36" y2="34.5"/><line x1="145.85" y1="0" x2="145.85" y2="34.5"/><line x1="154.33" y1="0" x2="154.33" y2="34.5"/><line x1="162.82" y1="0" x2="162.82" y2="34.5"/><line x1="171.30" y1="0" x2="171.30" y2="34.5"/><line x1="0" y1="0.50" x2="178.5" y2="0.50"/><line x1="0" y1="8.98" x2="178.5" y2="8.98"/><line x1="0" y1="17.47" x2="178.5" y2="17.47"/><line x1="0" y1="25.95" x2="178.5" y2="25.95"/><line x1="0" y1="34.44" x2="178.5" y2="34.44"/></g><path d="M71.6 0 V35" stroke="#e8e830" stroke-width="1"/><rect x="70.6" y="27.5" width="2" height="7" fill="#d8d820"/></svg>
<div class="r" style="left:495px;top:406px;width:180px;height:1px;background:#c8eec8;"></div>
<div class="r" style="left:495px;top:441.5px;width:180px;height:2px;background:#f6f6f8;"></div>
<svg class="r" style="left:495px;top:407px" width="180" height="34.5" viewBox="0 0 180 34.5"><defs><pattern id="stripes" patternUnits="userSpaceOnUse" width="2.2" height="10"><rect width="2.2" height="10" fill="#a8a800"/><rect width="1.1" height="10" fill="#dede20"/></pattern></defs><rect width="180" height="34.5" fill="#000"/><g stroke="#16b016" stroke-opacity="0.58" stroke-width="1.3"><line x1="3.80" y1="0" x2="3.80" y2="34.5"/><line x1="12.29" y1="0" x2="12.29" y2="34.5"/><line x1="20.77" y1="0" x2="20.77" y2="34.5"/><line x1="29.25" y1="0" x2="29.25" y2="34.5"/><line x1="37.74" y1="0" x2="37.74" y2="34.5"/><line x1="46.22" y1="0" x2="46.22" y2="34.5"/><line x1="54.71" y1="0" x2="54.71" y2="34.5"/><line x1="63.19" y1="0" x2="63.19" y2="34.5"/><line x1="71.68" y1="0" x2="71.68" y2="34.5"/><line x1="80.16" y1="0" x2="80.16" y2="34.5"/><line x1="88.65" y1="0" x2="88.65" y2="34.5"/><line x1="97.13" y1="0" x2="97.13" y2="34.5"/><line x1="105.62" y1="0" x2="105.62" y2="34.5"/><line x1="114.10" y1="0" x2="114.10" y2="34.5"/><line x1="122.59" y1="0" x2="122.59" y2="34.5"/><line x1="131.07" y1="0" x2="131.07" y2="34.5"/><line x1="139.56" y1="0" x2="139.56" y2="34.5"/><line x1="148.05" y1="0" x2="148.05" y2="34.5"/><line x1="156.53" y1="0" x2="156.53" y2="34.5"/><line x1="165.02" y1="0" x2="165.02" y2="34.5"/><line x1="173.50" y1="0" x2="173.50" y2="34.5"/><line x1="0" y1="0.50" x2="180" y2="0.50"/><line x1="0" y1="8.98" x2="180" y2="8.98"/><line x1="0" y1="17.47" x2="180" y2="17.47"/><line x1="0" y1="25.95" x2="180" y2="25.95"/><line x1="0" y1="34.44" x2="180" y2="34.44"/></g><rect x="0" y="2" width="84" height="13" fill="#000"/><rect x="0" y="15" width="20" height="13" fill="#000"/><path d="M169.4 0 V35" stroke="#e8e830" stroke-width="1"/><rect x="168.4" y="27.5" width="2" height="7" fill="#d8d820"/></svg>
<div class="t" style="left:497.30px;top:413.68px;font-size:9.0px;color:#d8d830;font-weight:normal;letter-spacing:0.15px;transform-origin:0 0;-webkit-text-stroke:0.05px currentColor;">SystemExplorer.exe</div>
<div class="t" style="left:497.30px;top:424.88px;font-size:9px;color:#d8d830;font-weight:normal;letter-spacing:0.15px;transform-origin:0 0;-webkit-text-stroke:0.05px currentColor;">1 KB</div>
<div class="r" style="left:139px;top:444px;width:527px;height:72px;background:#fff;border:1px solid #c8c6cc;border-top-color:#d4d2d8;"></div>
<div class="t" style="left:149.00px;top:449.50px;font-size:10.4px;color:#8a8a8a;font-weight:normal;letter-spacing:0px;transform-origin:0 0;transform:scaleX(0.85);-webkit-text-stroke:0.1px currentColor;">Suggerimento: fare clic sul file per informazioni</div>
<div class="r" style="left:3px;top:520px;width:674px;height:15px;background:linear-gradient(#f8f8fa,#f0eff3);border-top:1px solid #e6e5ea;"></div>
<div class="r" style="left:87px;top:522px;width:1px;height:12px;background:#dcdbe0;"></div>
<div class="r" style="left:88px;top:522px;width:1px;height:12px;background:#fbfbfc;"></div>
<div class="r" style="left:197px;top:522px;width:1px;height:12px;background:#dcdbe0;"></div>
<div class="r" style="left:198px;top:522px;width:1px;height:12px;background:#fbfbfc;"></div>
<div class="r" style="left:266px;top:522px;width:1px;height:12px;background:#dcdbe0;"></div>
<div class="r" style="left:267px;top:522px;width:1px;height:12px;background:#fbfbfc;"></div>
<div class="r" style="left:334px;top:522px;width:1px;height:12px;background:#dcdbe0;"></div>
<div class="r" style="left:335px;top:522px;width:1px;height:12px;background:#fbfbfc;"></div>
<div class="t" style="left:5.00px;top:523.70px;font-size:10.4px;color:#111;font-weight:normal;letter-spacing:0px;transform-origin:0 0;transform:scaleX(0.85);">Processi: 40</div>
<div class="t" style="left:91.20px;top:523.70px;font-size:10.4px;color:#111;font-weight:normal;letter-spacing:0px;transform-origin:0 0;transform:scaleX(0.85);">Uso della CPU: 4 %</div>
<div class="t" style="left:202.40px;top:523.70px;font-size:10.4px;color:#111;font-weight:normal;letter-spacing:0px;transform-origin:0 0;transform:scaleX(0.85);">RAM: 42 %</div>
<div class="t" style="left:270.60px;top:523.70px;font-size:10.4px;color:#111;font-weight:normal;letter-spacing:0px;transform-origin:0 0;transform:scaleX(0.85);">SWP: 14 %</div>
<svg class="r" style="left:664px;top:522px" width="12" height="12" viewBox="0 0 12 12"><g fill="#c8c6cc"><rect x="9" y="1" width="2" height="2"/><rect x="6" y="4" width="2" height="2"/><rect x="9" y="4" width="2" height="2"/><rect x="3" y="7" width="2" height="2"/><rect x="6" y="7" width="2" height="2"/><rect x="9" y="7" width="2" height="2"/></g></svg>
</body></html>
